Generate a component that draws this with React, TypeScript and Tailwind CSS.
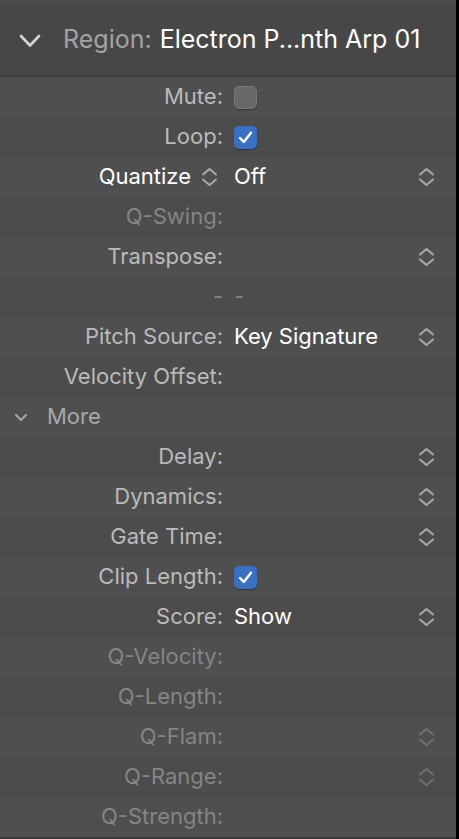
import React from "react";

type Row = {
  label: string;
  value?: string;
  tone?: "normal" | "dim" | "bright";
  control?: "check" | "checked";
  stepper?: "normal" | "dim";
};

const ROWS: Row[] = [
  { label: "Mute:", control: "check" },
  { label: "Loop:", control: "checked" },
  { label: "Quantize", value: "Off", tone: "bright", stepper: "normal" },
  { label: "Q-Swing:", tone: "dim" },
  { label: "Transpose:", stepper: "normal" },
  { label: "-", value: "-", tone: "dim" },
  { label: "Pitch Source:", value: "Key Signature", stepper: "normal" },
  { label: "Velocity Offset:" },
];

const MORE_ROWS: Row[] = [
  { label: "Delay:", stepper: "normal" },
  { label: "Dynamics:", stepper: "normal" },
  { label: "Gate Time:", stepper: "normal" },
  { label: "Clip Length:", control: "checked" },
  { label: "Score:", value: "Show", stepper: "normal" },
  { label: "Q-Velocity:", tone: "dim" },
  { label: "Q-Length:", tone: "dim" },
  { label: "Q-Flam:", tone: "dim", stepper: "dim" },
  { label: "Q-Range:", tone: "dim", stepper: "dim" },
  { label: "Q-Strength:", tone: "dim" },
];

function UpDown({ dim }: { dim?: boolean }) {
  return (
    <svg width={17} height={20} viewBox="0 0 17 20" fill="none">
      <path
        d="M2 7.5 L8.5 2 L15 7.5 M2 12.5 L8.5 18 L15 12.5"
        stroke={dim ? "#6e6e6e" : "#a9a9a9"}
        strokeWidth="2"
        strokeLinecap="round"
        strokeLinejoin="round"
      />
    </svg>
  );
}

function Checkbox({ checked }: { checked: boolean }) {
  if (checked) {
    return (
      <div className="flex h-[23px] w-[23px] items-center justify-center rounded-[5px] bg-[#3a6fc2] shadow-[0_1px_1px_rgba(0,0,0,0.35)]">
        <svg width="15" height="13" viewBox="0 0 15 13" fill="none">
          <path
            d="M2 7 L5.8 11 L13 1.8"
            stroke="#ffffff"
            strokeWidth="2.4"
            strokeLinecap="round"
            strokeLinejoin="round"
          />
        </svg>
      </div>
    );
  }
  return (
    <div className="h-[23px] w-[23px] rounded-[5px] border border-[#777777] bg-[#686868] shadow-[0_1px_1px_rgba(0,0,0,0.35)]" />
  );
}

function FieldRow({ row, index }: { row: Row; index: number }) {
  const tone = row.tone ?? "normal";
  const labelColor =
    tone === "bright" ? "text-white" : tone === "dim" ? "text-[#858585]" : "text-[#bababa]";
  const valueColor = tone === "dim" ? "text-[#858585]" : "text-white";
  const stripe = index % 2 === 0 ? "bg-[#4f4f4f]" : "bg-[#4c4c4c]";

  return (
    <div className={`flex h-10 shrink-0 items-center ${stripe}`}>
      <div className={`flex w-[223px] shrink-0 items-center justify-end ${labelColor}`}>
        <span className="pb-[2px]">{row.label}</span>
        {row.label === "Quantize" && (
          <span className="ml-[10px] mr-[5px] flex">
            <UpDown />
          </span>
        )}
      </div>
      <div className="ml-[11px] flex flex-1 items-center pr-[21px]">
        {row.control && <Checkbox checked={row.control === "checked"} />}
        {row.value && <span className={`pb-[2px] ${valueColor}`}>{row.value}</span>}
        <div className="flex-1" />
        {row.stepper && <UpDown dim={row.stepper === "dim"} />}
      </div>
    </div>
  );
}

export default function App() {
  return (
    <div
      className="flex h-[839px] w-[459px] bg-black text-[22px] leading-none"
      style={{ fontFamily: "Inter, 'Noto Sans', sans-serif" }}
    >
      <div className="flex w-[456px] flex-col bg-[#4c4c4c]">
        {/* Header */}
        <div className="flex h-[76px] shrink-0 items-center border-t-[5px] border-[#4c4c4c] bg-[#474747] pl-[19px]">
          <svg width="22" height="14" viewBox="0 0 22 14" fill="none">
            <path
              d="M2 2 L11 11.5 L20 2"
              stroke="#d6d6d6"
              strokeWidth="2.6"
              strokeLinecap="round"
              strokeLinejoin="round"
            />
          </svg>
          <span className="ml-[22px] pb-[2px] text-[25px] text-[#a3a3a3]">Region:</span>
          <span className="ml-[8px] pb-[2px] text-[25px] text-white">Electron P...nth Arp 01</span>
        </div>
        <div className="h-px shrink-0 bg-[#3b3b3b]" />

        {ROWS.map((r, i) => (
          <FieldRow key={r.label + i} row={r} index={i} />
        ))}

        {/* More disclosure */}
        <div className="flex h-10 shrink-0 items-center bg-[#4f4f4f] pl-[14px] text-[#a9a9a9]">
          <svg width="14" height="9" viewBox="0 0 14 9" fill="none">
            <path
              d="M2 2 L7 7 L12 2"
              stroke="#a9a9a9"
              strokeWidth="2"
              strokeLinecap="round"
              strokeLinejoin="round"
            />
          </svg>
          <span className="ml-[19px] pb-[2px]">More</span>
        </div>

        {MORE_ROWS.map((r, i) => (
          <FieldRow key={r.label} row={r} index={i + 9} />
        ))}

        <div className="flex-1 bg-[#3a3a3a]" />
      </div>
    </div>
  );
}
